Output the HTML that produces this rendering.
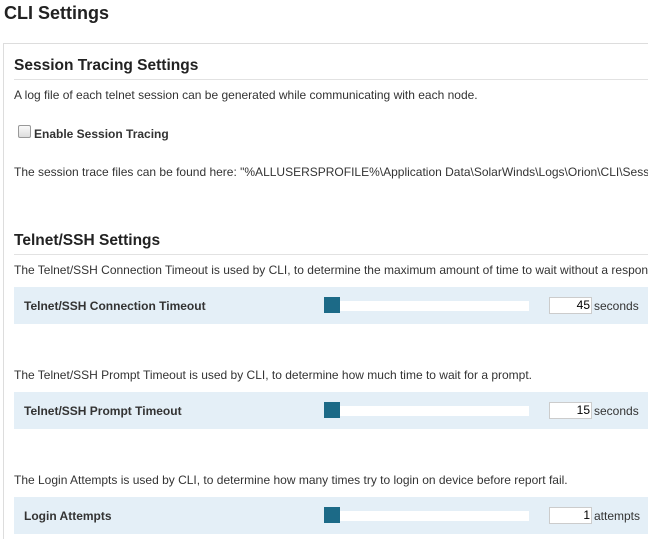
<!DOCTYPE html><html><head><style>
html,body{margin:0;width:648px;height:539px;overflow:hidden}
body{background:#fff;font-family:"Liberation Sans",sans-serif;color:#333;position:relative}
.a{position:absolute;white-space:nowrap}
h1{position:absolute;left:4px;top:1px;margin:0;font-size:18px;font-weight:bold;color:#222;line-height:24px}
.box{position:absolute;left:3px;top:43px;width:660px;height:520px;border:1px solid #ddd}
.h{font-size:15.5px;font-weight:bold;color:#222}
.line{position:absolute;left:14px;width:640px;height:1px;background:#e2e2e2}
.t{font-size:12px}
.row{position:absolute;left:14px;width:640px;height:37px;background:#e4eff7}
.row b{position:absolute;left:10px;top:12px;font-size:12px;color:#333}
.tr{position:absolute;left:310px;top:14px;width:205px;height:10px;background:#fff}
.hd{position:absolute;left:310px;top:10px;width:16px;height:16px;background:#1c6a87}
.in{position:absolute;left:535px;top:10px;width:40px;height:15px;border:1px solid #ccc;background:#fff;font-size:12px;text-align:right;line-height:15px;color:#000;padding-right:1px;box-sizing:content-box}
.u{position:absolute;left:580px;top:12px;font-size:12px}
.cb{position:absolute;left:18px;top:125px;width:11px;height:11px;border:1px solid #999;border-radius:2px;background:linear-gradient(#fafafa,#ddd)}
</style></head><body>
<h1>CLI Settings</h1>
<div class="box"></div>
<div class="a h" style="left:14px;top:57px">Session Tracing Settings</div>
<div class="line" style="top:79px"></div>
<div class="a t" style="left:14px;top:88px">A log file of each telnet session can be generated while communicating with each node.</div>
<div class="cb"></div>
<div class="a t" style="left:34px;top:127px;font-weight:bold">Enable Session Tracing</div>
<div class="a t" style="left:14px;top:165px">The session trace files can be found here: "%ALLUSERSPROFILE%\Application Data\SolarWinds\Logs\Orion\CLI\Session</div>
<div class="a h" style="left:14px;top:232px">Telnet/SSH Settings</div>
<div class="line" style="top:254px"></div>
<div class="a t" style="left:14px;top:263px">The Telnet/SSH Connection Timeout is used by CLI, to determine the maximum amount of time to wait without a response</div>
<div class="row" style="top:287px"><b>Telnet/SSH Connection Timeout</b><div class="tr"></div><div class="hd"></div><div class="in">45</div><div class="u">seconds</div></div>
<div class="a t" style="left:14px;top:368px">The Telnet/SSH Prompt Timeout is used by CLI, to determine how much time to wait for a prompt.</div>
<div class="row" style="top:392px"><b>Telnet/SSH Prompt Timeout</b><div class="tr"></div><div class="hd"></div><div class="in">15</div><div class="u">seconds</div></div>
<div class="a t" style="left:14px;top:473px">The Login Attempts is used by CLI, to determine how many times try to login on device before report fail.</div>
<div class="row" style="top:497px"><b>Login Attempts</b><div class="tr"></div><div class="hd"></div><div class="in">1</div><div class="u">attempts</div></div>
</body></html>
